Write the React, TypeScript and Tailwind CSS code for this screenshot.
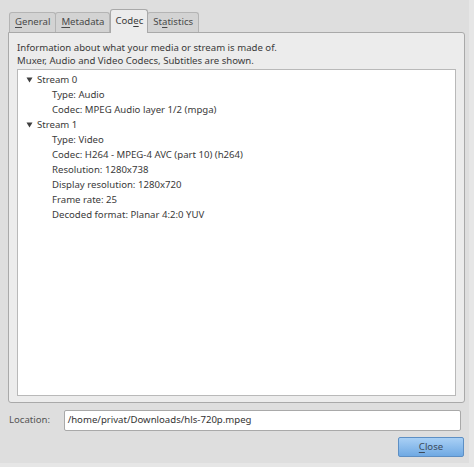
import React from "react";

const font = { fontFamily: '"Noto Sans", "Open Sans", sans-serif' };

function Mnemonic({ text, index }: { text: string; index: number }) {
  return (
    <>
      {text.slice(0, index)}
      <span className="underline underline-offset-2 decoration-[1px]">{text[index]}</span>
      {text.slice(index + 1)}
    </>
  );
}

function Tab({ label, u, active }: { label: string; u: number; active?: boolean }) {
  if (active) {
    return (
      <div className="relative -mb-px z-10 h-[24px] px-[4px] flex items-center border border-b-0 border-[#a9a9a9] rounded-t-[3px] bg-[#ececec] text-[#3a3a3a]">
        <Mnemonic text={label} index={u} />
      </div>
    );
  }
  return (
    <div className="h-[20px] px-[5px] flex items-center border border-b-0 border-[#b4b4b4] rounded-t-[3px] bg-[#d3d3d3] text-[#4a4a4a] -ml-px first:ml-0">
      <Mnemonic text={label} index={u} />
    </div>
  );
}

const streams = [
  { name: "Stream 0", items: ["Type: Audio", "Codec: MPEG Audio layer 1/2 (mpga)"] },
  {
    name: "Stream 1",
    items: [
      "Type: Video",
      "Codec: H264 - MPEG-4 AVC (part 10) (h264)",
      "Resolution: 1280x738",
      "Display resolution: 1280x720",
      "Frame rate: 25",
      "Decoded format: Planar 4:2:0 YUV",
    ],
  },
];

export default function App() {
  return (
    <div className="w-[474px] h-[467px] bg-[#e6e6e6] overflow-hidden">
      <div className="w-[469px] h-[463px] bg-[#dedede] text-[9.6px] text-[#3a3a3a]" style={font}>
        <div className="pt-[9px] px-[8px]">
          {/* tabs */}
          <div className="flex items-end pl-px">
            <Tab label="General" u={0} />
            <Tab label="Metadata" u={0} />
            <Tab label="Codec" u={3} active />
            <Tab label="Statistics" u={2} />
          </div>
          {/* panel */}
          <div className="h-[371px] w-[457px] border border-[#a9a9a9] rounded-b-[3px] rounded-tr-[3px] bg-[#ececec] px-[8px] pt-[8px] pb-[6px] flex flex-col">
            <div className="text-[#3a3a3a]">
              <div className="h-[13px] leading-[13px]">Information about what your media or stream is made of.</div>
              <div className="h-[13px] leading-[13px]">Muxer, Audio and Video Codecs, Subtitles are shown.</div>
            </div>
            <div className="mt-[2px] flex-1 bg-white border border-[#b9b9b9] pt-[2px]">
              {streams.map((s) => (
                <div key={s.name}>
                  <div className="h-[15px] leading-[15px] flex items-center pl-[8px]">
                    <svg width="10" height="6" viewBox="0 0 10 6" className="mr-px">
                      <path d="M0.5 0.5 L6.5 0.5 L3.5 5.5 Z" fill="#3f3f3f" />
                    </svg>
                    <span>{s.name}</span>
                  </div>
                  {s.items.map((it) => (
                    <div key={it} className="h-[15px] leading-[15px] pl-[34px]">
                      {it}
                    </div>
                  ))}
                </div>
              ))}
            </div>
          </div>
          {/* location */}
          <div className="mt-[7px] flex items-center">
            <div className="w-[56px] pl-px text-[#555]">Location:</div>
            <div className="w-[400px] h-[21px] bg-white border border-[#a9a9a9] rounded-[2px] px-[3px] flex items-center text-[#333]">
              /home/privat/Downloads/hls-720p.mpeg
            </div>
          </div>
          <div className="mt-[6px] w-[456px] flex justify-end">
            <button className="w-[66px] h-[20px] rounded-[2px] border border-[#5d8fc4] bg-gradient-to-b from-[#a9d0f5] to-[#6fa9e3] text-[#3c4a5a] flex items-center justify-center">
              <Mnemonic text="Close" index={0} />
            </button>
          </div>
        </div>
      </div>
    </div>
  );
}
